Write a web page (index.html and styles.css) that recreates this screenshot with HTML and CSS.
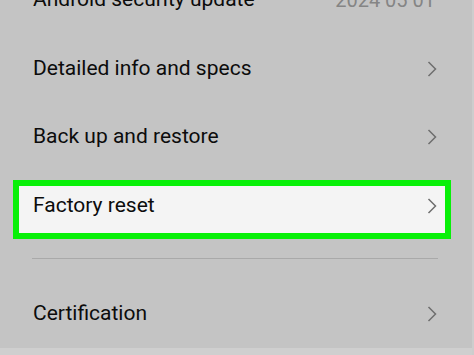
FILE: index.html
```html
<!DOCTYPE html>
<html>
<head>
<meta charset="utf-8">
<link rel="stylesheet" href="styles.css">
</head>
<body>
<div class="screen">
  <div class="list">
    <div class="row first">
      <span class="label">Android security update</span>
      <span class="value">2024 05 01</span>
    </div>
    <div class="row">
      <span class="label">Detailed info and specs</span>
      <svg class="chev" viewBox="0 0 10 16" width="10" height="16"><polyline points="1.5,1 8.5,8 1.5,15" fill="none" stroke="#6e6e6e" stroke-width="1.5"/></svg>
    </div>
    <div class="row">
      <span class="label">Back up and restore</span>
      <svg class="chev" viewBox="0 0 10 16" width="10" height="16"><polyline points="1.5,1 8.5,8 1.5,15" fill="none" stroke="#6e6e6e" stroke-width="1.5"/></svg>
    </div>
    <div class="row-slot">
      <div class="highlight">
        <span class="label">Factory reset</span>
        <svg class="chev" viewBox="0 0 10 16" width="10" height="16"><polyline points="1.5,1 8.5,8 1.5,15" fill="none" stroke="#6e6e6e" stroke-width="1.5"/></svg>
      </div>
    </div>
    <div class="divider"></div>
    <div class="row cert">
      <span class="label">Certification</span>
      <svg class="chev" viewBox="0 0 10 16" width="10" height="16"><polyline points="1.5,1 8.5,8 1.5,15" fill="none" stroke="#6e6e6e" stroke-width="1.5"/></svg>
    </div>
  </div>
  <div class="bottom"></div>
</div>
</body>
</html>
```
FILE: styles.css
```css
html, body {
  margin: 0;
  padding: 0;
}
body {
  width: 474px;
  height: 355px;
  overflow: hidden;
  background: #c4c4c4;
  font-family: Roboto, "Liberation Sans", sans-serif;
}
.screen {
  width: 474px;
  height: 355px;
  display: flex;
  flex-direction: column;
  overflow: hidden;
  border-right: 2px solid #cdcdcd;
  box-sizing: border-box;
}
.list {
  flex: 1;
  display: flex;
  flex-direction: column;
  margin-top: -34.5px;
}
.row {
  height: 68.5px;
  flex: none;
  display: flex;
  align-items: center;
  justify-content: space-between;
  padding: 0 35px 0 33px;
}
.label {
  font-size: 21px;
  color: #0c0c0c;
  line-height: 1;
}
.value {
  font-size: 20px;
  color: #858585;
  margin-right: 2px;
}
.chev {
  display: block;
  margin-top: 1px;
}
.row-slot {
  height: 68.5px;
  flex: none;
  padding-top: 9px;
  box-sizing: border-box;
}
.highlight {
  margin: 0 21px 0 13px;
  height: 59px;
  box-sizing: border-box;
  border: 6px solid #08f008;
  background: #f4f4f4;
  display: flex;
  align-items: center;
  justify-content: space-between;
  padding: 0 8px 9px 14px;
}
.divider {
  height: 1px;
  background: #a9a9a9;
  margin: 18.5px 34px 0 32px;
  flex: none;
}
.cert {
  margin-top: 20px;
}
.bottom {
  height: 9px;
  background: #cfcfcf;
  flex: none;
}
```
